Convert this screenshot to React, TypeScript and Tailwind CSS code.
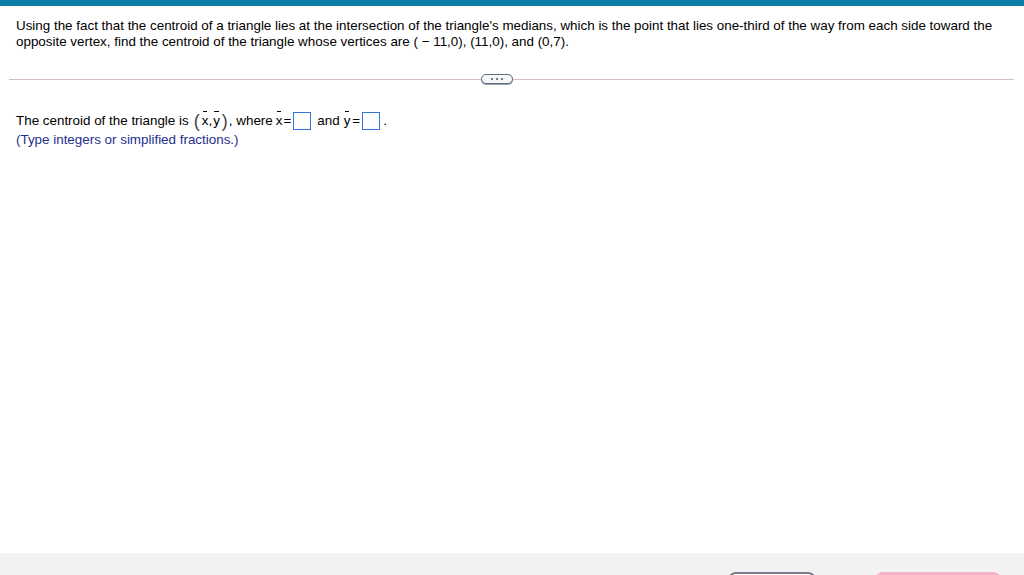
export default function App() {
  return (
    <div
      className="flex h-[575px] w-[1024px] flex-col overflow-hidden bg-white text-[13.4px] text-black"
      style={{ fontFamily: '"Liberation Sans", Arial, sans-serif' }}
    >
      <div className="h-[6px] bg-[#0b7ca3]" />

      <main className="flex-1">
        {/* question */}
        <p className="px-4 pt-[12px] leading-[16px]">
          Using the fact that the centroid of a triangle lies at the intersection of the triangle's medians, which is the
          point that lies one-third of the way from each side toward the opposite vertex, find the centroid of the
          triangle whose vertices are ( − 11,0), (11,0), and (0,7).
        </p>

        {/* divider */}
        <div className="mt-[24px] flex items-center pl-[9px] pr-[10px]">
          <div className="h-px w-[472px] bg-[#d9bcc6]" />
          <div className="flex h-[10px] w-[32px] items-center justify-center gap-[3px] rounded-full border border-[#5f6b7a] bg-[#f5f7fa] shadow-[0_1px_0_#9aa3ad]">
            <span className="h-[2px] w-[2px] rounded-full bg-[#4a5563]" />
            <span className="h-[2px] w-[2px] rounded-full bg-[#4a5563]" />
            <span className="h-[2px] w-[2px] rounded-full bg-[#4a5563]" />
          </div>
          <div className="h-px flex-1 bg-[#d9bcc6]" />
        </div>

        {/* answer */}
        <div className="mt-[27px] px-4">
          <div className="flex h-[20px] items-center">
            <span>The centroid of the triangle is</span>
            <span className="ml-[5px] flex items-center">
              <span className="text-[18px] leading-none text-[#444]">(</span>
              <span className="ml-[2px]">
                <Bar>x</Bar>
              </span>
              <span>,</span>
              <span className="ml-[1px]">
                <Bar>y</Bar>
              </span>
              <span className="ml-[2px] text-[18px] leading-none text-[#444]">)</span>
            </span>
            <span className="ml-[1px]">, where</span>
            <span className="ml-[3px]">
              <Bar>x</Bar>
            </span>
            <span className="ml-[1px]">=</span>
            <span className="ml-[2px] h-[18px] w-[18px] border border-[#3a74d6]" />
            <span className="ml-[6px]">and</span>
            <span className="ml-[4px]">
              <Bar>y</Bar>
            </span>
            <span className="ml-[2px]">=</span>
            <span className="ml-[2px] h-[18px] w-[18px] border border-[#3a74d6]" />
            <span className="ml-[3px]">.</span>
          </div>
          <p className="leading-[18px] text-[#1d2f8c]">(Type integers or simplified fractions.)</p>
        </div>
      </main>

      <footer className="relative h-[22px] bg-[#f2f2f2]">
        <div className="absolute left-[728px] top-[19px] h-[20px] w-[88px] rounded-[8px] border-2 border-[#777c88] bg-white" />
        <div className="absolute left-[875px] top-[19px] h-[20px] w-[126px] rounded-[8px] bg-[#f3b3c6]" />
      </footer>
    </div>
  )
}

function Bar({ children }: { children: string }) {
  return (
    <span className="relative inline-block">
      <span className="absolute left-[1px] right-[1px] top-[0px] h-px bg-black" />
      {children}
    </span>
  )
}
